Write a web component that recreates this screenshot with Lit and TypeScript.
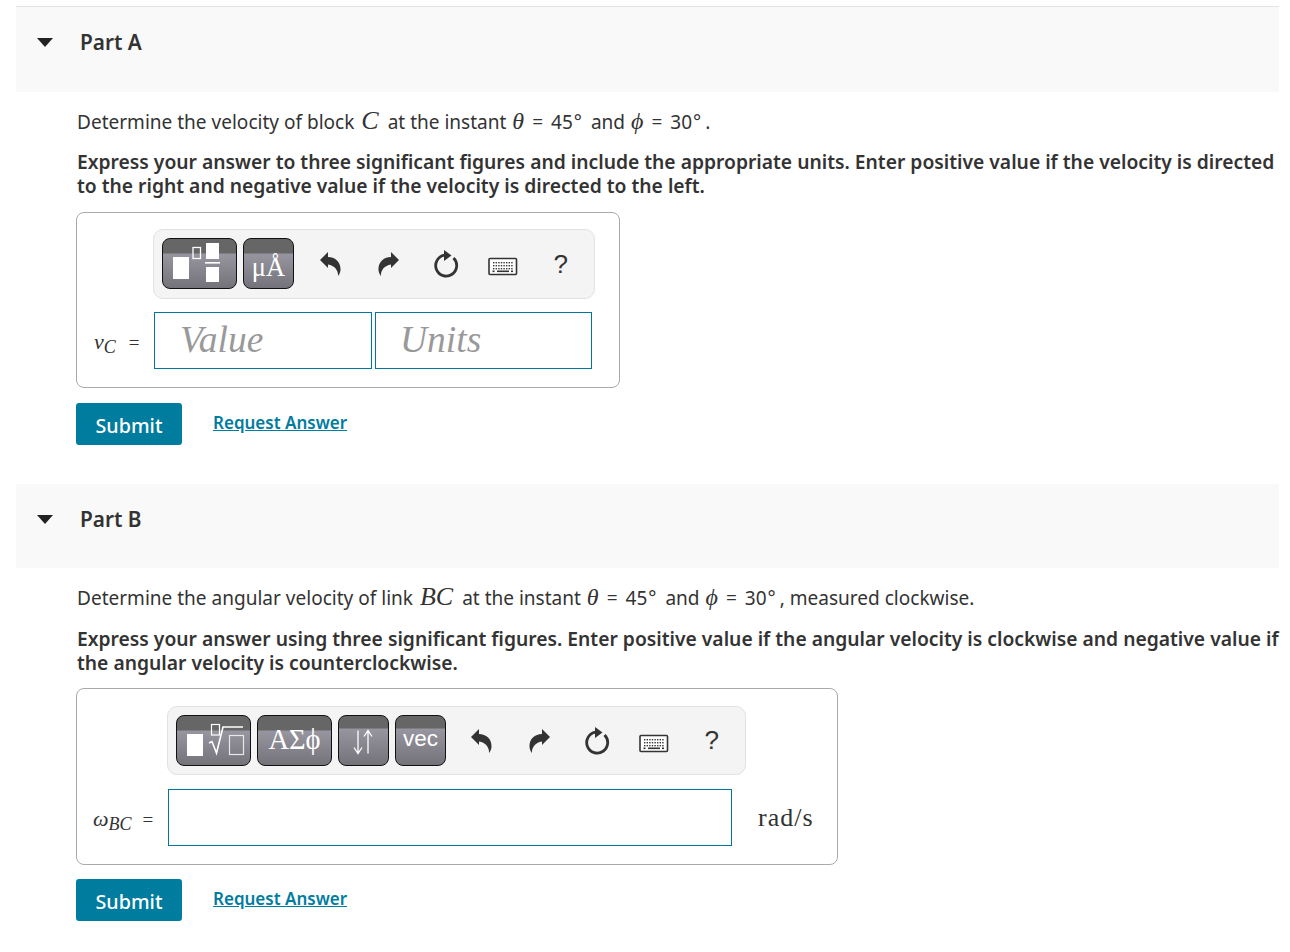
import { LitElement, html, css, svg } from "lit";
import { customElement } from "lit/decorators.js";

const REPLY = "M0 8 L8 0 V5 C15 5 21 10 20.500 18 C20.400 20 19 23 18 24 C18.500 19 15 13.500 8 12.500 V16 Z";

const undo = html`<svg class="ic" viewBox="0 0 21 24" width="21" height="24"><path d=${REPLY} fill="#333"></path></svg>`;
const redo = html`<svg class="ic" viewBox="0 0 21 24" width="21" height="24"><g transform="translate(21 0) scale(-1 1)"><path d=${REPLY} fill="#333"></path></g></svg>`;
const refresh = html`<svg class="ic" viewBox="0 0 26 28" width="26" height="28"><path d="M11.500 5.200 A10.500 10.500 0 1 0 20.500 8" fill="none" stroke="#333" stroke-width="2.800"></path><path d="M11 0 L18.500 5.500 L11 11 Z" fill="#333"></path></svg>`;
const dots = (y: number, n: number, x0: number, step: number) =>
  Array.from({ length: n }, (_, i) => svg`<rect x=${x0 + i * step} y=${y} width="1.400" height="1.400" fill="#333"></rect>`);
const keyboard = html`<svg class="ic kb" viewBox="0 0 30 20" width="30" height="20"><rect x="1" y="1.500" width="27.500" height="16" rx="1" fill="#fff" stroke="#333" stroke-width="1.600"></rect>${dots(5, 8, 5, 2.600)}${dots(8, 8, 5, 2.600)}${dots(11, 8, 5, 2.600)}<rect x="9" y="13.500" width="12" height="1.600" fill="#333"></rect><rect x="4.500" y="13.500" width="2" height="1.600" fill="#333"></rect><rect x="23" y="13.500" width="2" height="1.600" fill="#333"></rect></svg>`;

const templatesIcon = html`<svg viewBox="0 0 73 49" width="73" height="49"><rect x="10" y="18" width="16" height="22" fill="#fff"></rect><rect x="30" y="8.500" width="7.500" height="11" fill="none" stroke="#fff" stroke-width="1.300"></rect><rect x="43" y="4" width="13" height="16" fill="#fff"></rect><rect x="42" y="23" width="15" height="1.600" fill="#fff"></rect><rect x="43" y="28" width="13" height="15" fill="#fff"></rect></svg>`;
const radicalIcon = html`<svg viewBox="0 0 73 49" width="73" height="49"><rect x="10" y="18" width="16" height="22" fill="#fff"></rect><rect x="34.500" y="8.500" width="8" height="10.500" fill="none" stroke="#fff" stroke-width="1.200"></rect><path d="M32 27 L35 25.500 L39.500 37 L46 11 H66" fill="none" stroke="#fff" stroke-width="1.600"></path><rect x="52.500" y="19.500" width="14" height="19" fill="none" stroke="#e8e8e8" stroke-width="1.200"></rect></svg>`;
const arrowsIcon = html`<svg viewBox="0 0 49 49" width="49" height="49"><path d="M19 14.500 V37 M15 31.500 L19 37.500 L23 31.500 M29 37.500 V14.500 M25 20.500 L29 14.500 L33 20.500" fill="none" stroke="#fff" stroke-width="1.300"></path></svg>`;

type Btn = { cls: string; body: unknown };

@customElement("part-panel")
class PartPanel extends LitElement {
  static properties = {
    title: {},
    wide: { type: Boolean },
    first: { type: Boolean },
    prompt: { attribute: false },
    instr: { attribute: false },
    btns: { attribute: false },
    label: { attribute: false },
  };
  declare title: string;
  declare wide: boolean;
  declare first: boolean;
  declare prompt: unknown;
  declare instr: string;
  declare btns: Btn[];
  declare label: unknown;

  static styles = css`
    :host { display: block; }
    .head { background: #f9f9f9; display: flex; align-items: flex-start; height: 84px; }
    .head.first { height: 86px; border-top: 1px solid #e3e3e3; box-sizing: border-box; }
    .tri { width: 0; height: 0; border-left: 8px solid transparent; border-right: 8px solid transparent; border-top: 9px solid #222; margin: 31px 0 0 21px; }
    .head h2 { margin: 20px 0 0 27px; font: 600 20.800px/30px "Noto Sans", sans-serif; color: #333; }
    .body { padding: 0 0 0 60px; }
    .prompt { margin: 0 0 0 1px; padding-top: 15px; height: 28px; line-height: 28px; font-size: 19.050px; color: #333; white-space: nowrap; }
    .prompt i { font-family: "Liberation Serif", serif; font-size: 24px; margin: 0 3px 0 1px; }
    .prompt i.lg { font-size: 26px; margin: 0 4px 0 2px; }
    .prompt b { font-weight: 400; margin: 0 3px 0 5px; }
    .prompt u { text-decoration: none; margin: 0 4px 0 1px; }
    .instr { margin: 15px 0 0 1px; font-size: 19.280px; font-weight: 600; line-height: 24px; color: #333; width: 1204px; }
    .wide .instr { margin-top: 16px; }
    .box { box-sizing: border-box; margin-top: 14px; border: 1px solid #aaa; border-radius: 8px; width: 544px; height: 176px; padding: 16px 0 0 76px; }
    .box.wide { width: 762px; height: 177px; padding: 17px 0 0 90px; margin-top: 13px; }
    .bar { box-sizing: border-box; display: flex; align-items: center; width: 442px; height: 70px; padding: 0 0 0 8px; background: #f4f4f4; border: 1px solid #e2e2e2; border-radius: 10px; }
    .wide .bar { width: 579px; height: 69px; }
    .btn { box-sizing: border-box; flex: none; height: 51px; border: 1px solid #111; border-radius: 8px; margin: 0 6px 1px 0; color: #fff; overflow: hidden; display: flex; align-items: flex-start; justify-content: center;
      background: linear-gradient(#666 0, #666 14px, #97959f 15px, #74737a 100%); }
    .wide .btn { margin-bottom: 0; }
    .btn svg { display: block; flex: none; }
    .b75 { width: 75px; }
    .b51 { width: 51px; background: linear-gradient(#666 0, #666 12px, #97959f 13px, #74737a 100%); }
    .b51.tall { background: linear-gradient(#666 0, #666 14px, #97959f 15px, #74737a 100%); }
    .unit { font: 26.500px/57px "Liberation Serif", serif; }
    .greek { font: 28.500px/48px "Liberation Serif", serif; }
    .vec { font: 22.500px/45px "Liberation Sans", sans-serif; }
    .tools { display: flex; align-items: center; margin-left: 2px; }
    .wide .tools { margin-left: 1px; }
    .tool { flex: none; width: 57.500px; display: flex; justify-content: center; font: 26px "Liberation Sans", sans-serif; color: #333; }
    .kb { margin-top: 6px; }
    .row { display: flex; align-items: center; margin-top: 13px; height: 57px; }
    .wide .row { margin-top: 14px; }
    .lab { flex: none; display: flex; align-items: baseline; width: 77px; margin-left: -76px; padding: 2px 0 0 17px; box-sizing: border-box; font: 22px "Liberation Serif", serif; color: #333; white-space: nowrap; }
    .wide .lab { width: 91px; margin-left: -90px; padding-left: 16px; }
    .lab i sub { font-size: 18px; vertical-align: -4px; line-height: 0; }
    .lab span { margin-left: 13px; font-size: 19px; }
    .wide .lab span { margin-left: 11px; }
    .field { box-sizing: border-box; height: 57px; border: 1px solid #00789e; background: #fff; font: italic 37.500px/54px "Liberation Serif", serif; color: #999; padding-left: 25px; }
    .f1 { width: 218px; }
    .f2 { width: 217px; margin-left: 3px; padding-left: 24px; }
    .f3 { width: 564px; }
    .rad { margin-left: 26px; font: 26px "Liberation Serif", serif; letter-spacing: 1px; color: #333; }
    .actions { display: flex; align-items: flex-start; margin-top: 15px; }
    .wide ~ .actions { margin-top: 14px; }
    .submit { box-sizing: border-box; width: 106px; height: 42px; border: 0; border-radius: 3px; background: #007c9f; color: #fff; font: 500 19.700px/45px "Noto Sans", sans-serif; padding: 0; }
    a { margin: 7px 0 0 31px; font: 600 17px/26px "Noto Sans", sans-serif; color: #007c9f; text-decoration: underline; }
  `;

  render() {
    return html`
      <div class="head ${this.first ? "first" : ""}"><span class="tri"></span><h2>${this.title}</h2></div>
      <div class="body ${this.wide ? "wide" : ""}">
        <p class="prompt">${this.prompt}</p>
        <p class="instr">${this.instr}</p>
        <div class="box ${this.wide ? "wide" : ""}">
          <div class="bar">
            ${this.btns.map((b) => html`<span class="btn ${b.cls}">${b.body}</span>`)}
            <span class="tools">
              <span class="tool">${undo}</span><span class="tool">${redo}</span><span class="tool">${refresh}</span><span class="tool">${keyboard}</span><span class="tool">?</span>
            </span>
          </div>
          <div class="row">
            <span class="lab">${this.label}<span>=</span></span>
            ${this.wide
              ? html`<span class="field f3"></span><span class="rad">rad/s</span>`
              : html`<span class="field f1">Value</span><span class="field f2">Units</span>`}
          </div>
        </div>
        <div class="actions"><button class="submit">Submit</button><a href="#">Request Answer</a></div>
      </div>
    `;
  }
}

@customElement("app-root")
export class AppRoot extends LitElement {
  static styles = css`
    :host { display: block; width: 1290px; height: 952px; overflow: hidden; background: #fff; font-family: "Noto Sans", sans-serif; box-sizing: border-box; padding: 6px 11px 0 16px; }
    .gap { height: 39px; }
  `;
  render() {
    const angles = html`<i>θ</i><b>=</b> 45<u>°</u> and <i>ϕ</i><b>=</b> 30<u>°</u>`;
    const pa = html`Determine the velocity of block <i class="lg">C</i> at the instant ${angles}.`;
    const pb = html`Determine the angular velocity of link <i class="lg">BC</i> at the instant ${angles}, measured clockwise.`;
    const ab: Btn[] = [
      { cls: "b75", body: templatesIcon },
      { cls: "b51 tall", body: html`<span class="unit">μÅ</span>` },
    ];
    const bb: Btn[] = [
      { cls: "b75", body: radicalIcon },
      { cls: "b75", body: html`<span class="greek">ΑΣϕ</span>` },
      { cls: "b51", body: arrowsIcon },
      { cls: "b51", body: html`<span class="vec">vec</span>` },
    ];
    return html`
      <part-panel first title="Part A" .prompt=${pa}
        .instr=${"Express your answer to three significant figures and include the appropriate units. Enter positive value if the velocity is directed to the right and negative value if the velocity is directed to the left."}
        .btns=${ab} .label=${html`<i>v<sub>C</sub></i>`}></part-panel>
      <div class="gap"></div>
      <part-panel wide title="Part B" .prompt=${pb}
        .instr=${"Express your answer using three significant figures. Enter positive value if the angular velocity is clockwise and negative value if the angular velocity is counterclockwise."}
        .btns=${bb} .label=${html`<i>ω<sub>BC</sub></i>`}></part-panel>
    `;
  }
}
void PartPanel;
